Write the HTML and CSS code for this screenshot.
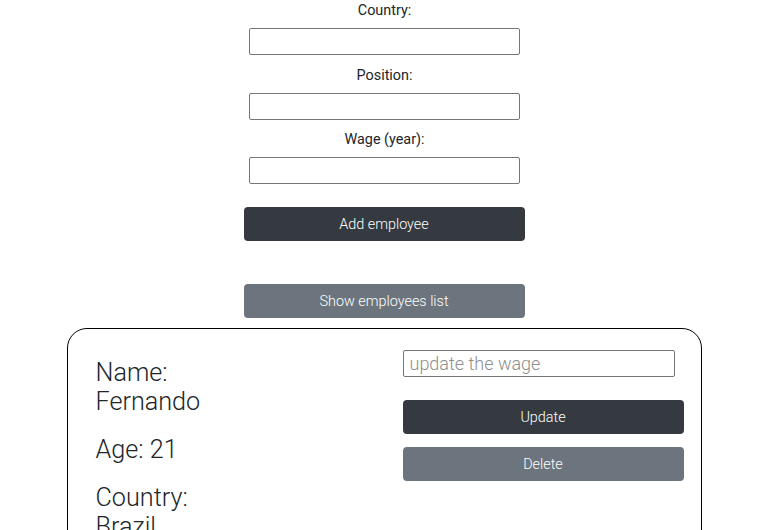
FILE: index.html
```html
<!DOCTYPE html>
<html lang="en">
<head>
    <meta charset="UTF-8">
    <meta name="viewport" content="width=device-width, initial-scale=1.0">
    <title>Employees</title>
    <link rel="stylesheet" href="styles.css">
</head>
<body>
    <div class="form">
        <label>Country:</label>
        <input type="text" id="country">
        <label>Position:</label>
        <input type="text" id="position">
        <label>Wage (year):</label>
        <input type="text" id="wage">
        <button class="btn btn-dark add">Add employee</button>
    </div>

    <div class="show">
        <button class="btn btn-secondary">Show employees list</button>
    </div>

    <div class="employee">
        <div class="info">
            <p>Name: Fernando</p>
            <p>Age: 21</p>
            <p>Country: Brazil</p>
        </div>
        <div class="actions">
            <input type="text" class="update-input" placeholder="update the wage">
            <button class="btn btn-dark">Update</button>
            <button class="btn btn-secondary">Delete</button>
        </div>
    </div>
</body>
</html>
```

FILE: styles.css
```css
body {
    font-family: Roboto, "Liberation Sans", sans-serif;
    color: #212529;
    background: #fff;
    margin: 0;
}
.form {
    display: flex;
    flex-direction: column;
    align-items: center;
    padding-left: 1px;
}
label {
    font-size: 14.4px;
    line-height: 20px;
    padding-top: 1px;
    margin-bottom: 7px;
}
input {
    box-sizing: border-box;
    width: 271px;
    height: 27px;
    border: 1px solid #767676;
    border-radius: 2px;
    padding: 1px 6px;
    margin: 0 0 9.5px;
    font-family: Roboto, "Liberation Sans", sans-serif;
}
.btn {
    box-sizing: border-box;
    width: 281px;
    height: 34px;
    border: none;
    border-radius: 4px;
    padding-top: 2px;
    color: #fff;
    font-family: Roboto, "Liberation Sans", sans-serif;
    font-size: 14.4px;
    font-weight: 300;
    cursor: pointer;
}
.btn-dark {
    background: #343a40;
}
.btn-secondary {
    background: #6c757d;
}
.form .add {
    margin-top: 13px;
    margin-left: -1px;
}
.show {
    display: flex;
    justify-content: center;
    margin-top: 43px;
}
.employee {
    box-sizing: border-box;
    width: 635px;
    margin: 10px auto 0;
    border: 1px solid #000;
    border-radius: 20px;
    padding: 21px 17px 40px 28px;
    display: flex;
    justify-content: space-between;
}
.info {
    width: 150px;
    padding-top: 8px;
}
.info p {
    font-size: 25.2px;
    font-weight: 300;
    line-height: 29px;
    margin: 0 0 19px;
}
.actions {
    width: 281px;
    display: flex;
    flex-direction: column;
}
.actions .update-input {
    width: 272px;
    font-size: 18px;
    font-weight: 300;
    margin-bottom: 23px;
}
.update-input::placeholder {
    color: #8e8e8e;
}
.actions .btn {
    margin-bottom: 13px;
}
```
